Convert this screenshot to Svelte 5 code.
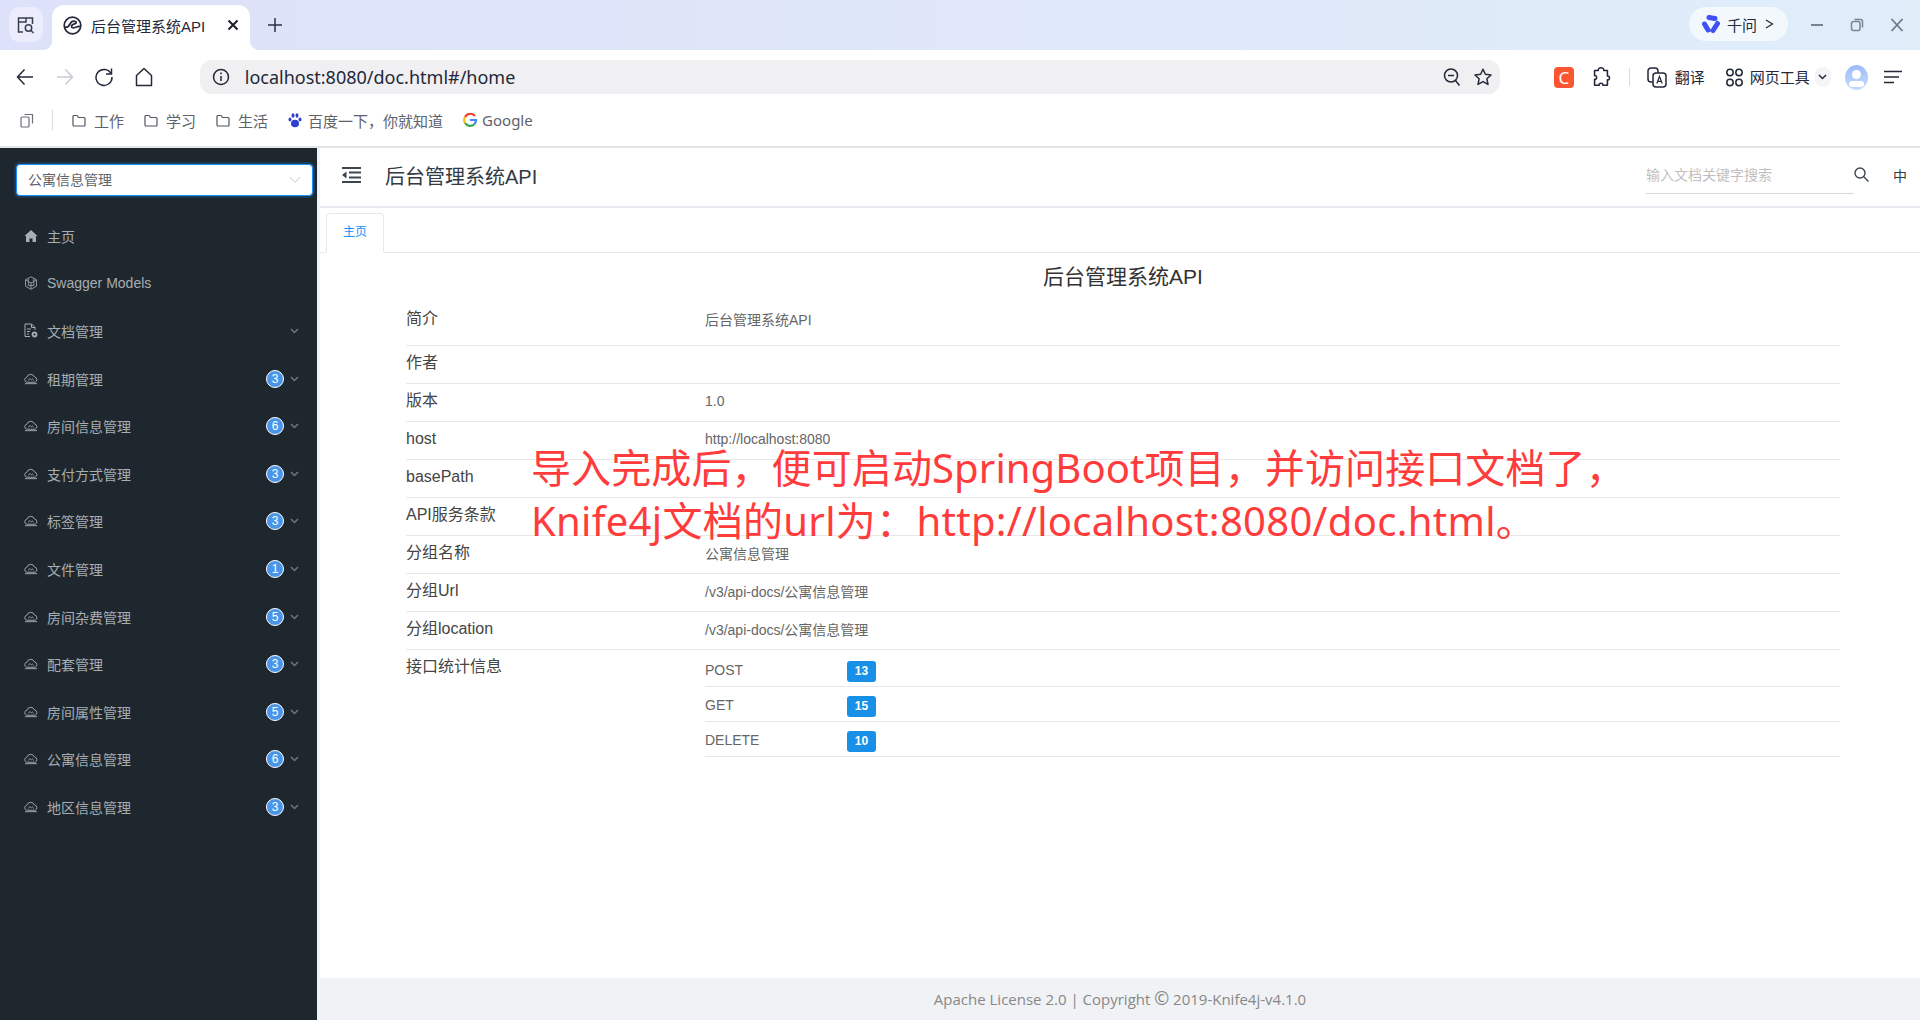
<script>
	const bookmarks = ['工作', '学习', '生活'];
	const groups = [
		{ name: '租期管理', count: 3 },
		{ name: '房间信息管理', count: 6 },
		{ name: '支付方式管理', count: 3 },
		{ name: '标签管理', count: 3 },
		{ name: '文件管理', count: 1 },
		{ name: '房间杂费管理', count: 5 },
		{ name: '配套管理', count: 3 },
		{ name: '房间属性管理', count: 5 },
		{ name: '公寓信息管理', count: 6 },
		{ name: '地区信息管理', count: 3 },
	];
	const rows = [
		{ label: '作者', value: '' },
		{ label: '版本', value: '1.0' },
		{ label: 'host', value: 'http://localhost:8080' },
		{ label: 'basePath', value: '/' },
		{ label: 'API服务条款', value: '' },
		{ label: '分组名称', value: '公寓信息管理' },
		{ label: '分组Url', value: '/v3/api-docs/公寓信息管理' },
		{ label: '分组location', value: '/v3/api-docs/公寓信息管理' },
	];
	const stats = [
		{ method: 'POST', count: 13 },
		{ method: 'GET', count: 15 },
		{ method: 'DELETE', count: 10 },
	];
</script>

<div class="page">
	<div class="tabbar">
		<div class="side-btn">
			<svg width="20" height="20" viewBox="0 0 20 20" fill="none" stroke="#3a3f4c" stroke-width="1.5"><path d="M7 17H2.5V3h14v6M2.5 7H10V3" /><circle cx="12.5" cy="13" r="3.2" /><path d="M15 15.5l2.5 2.5" /></svg>
		</div>
		<div class="tab">
			<svg width="19" height="19" viewBox="0 0 19 19" fill="none" stroke="#23283a" stroke-width="1.7"><circle cx="9.5" cy="9.5" r="8.3" /><path d="M2 11c3 1 4-1 5-3s3-3.5 5.500-2.500c1 .4 1 1.500 0 2-2 .6-4 1-4 3 0 1.500 2 1.500 3.500 1 2-.6 3-1.500 5-1" /></svg>
			<span class="tab-title">后台管理系统API</span>
			<svg class="tab-close" width="12" height="12" viewBox="0 0 12 12" stroke="#1c1f2a" stroke-width="2"><path d="M1.5 1.5l9 9M10.5 1.5l-9 9" /></svg>
		</div>
		<svg class="plus" width="14" height="14" viewBox="0 0 14 14" stroke="#2b3040" stroke-width="1.5"><path d="M7 0v14M0 7h14" /></svg>
		<div class="pill">
			<svg width="20" height="20" viewBox="0 0 20 20" fill="none" stroke="#3f51f5" stroke-width="5" stroke-linecap="round"><path d="M8 3.5l6 1M3.5 10l3.5 6M16.5 9.5l-4.5 7" /></svg>
			<span class="pill-text">千问</span>
			<svg width="9" height="10" viewBox="0 0 9 10" fill="none" stroke="#23283a" stroke-width="1.2"><path d="M1 1l6.5 4L1 9" /></svg>
		</div>
		<svg class="win-btn first" width="14" height="14" viewBox="0 0 14 14" stroke="#6b7586" stroke-width="1.8"><path d="M1 7h12" /></svg>
		<svg class="win-btn" width="14" height="14" viewBox="0 0 14 14" fill="none" stroke="#7b8594" stroke-width="1.5"><rect x="1.5" y="3.5" width="8.5" height="9" rx="2" /><path d="M4.5 1.5h6a2 2 0 0 1 2 2v6" /></svg>
		<svg class="win-btn last" width="14" height="14" viewBox="0 0 14 14" stroke="#6b7586" stroke-width="1.7"><path d="M1.5 1l11 12M12.5 1l-11 12" /></svg>
	</div>

	<div class="toolbar">
		<div class="nav-btn">
			<svg width="18" height="18" viewBox="0 0 18 18" fill="none" stroke="#23283a" stroke-width="1.5"><path d="M17 9H1.5M8.5 1.5 1.5 9l7 7.5" /></svg>
		</div>
		<div class="nav-btn">
			<svg width="18" height="18" viewBox="0 0 18 18" fill="none" stroke="#c9ccd3" stroke-width="1.5"><path d="M1 9h15.5M9.5 1.5l7 7.5-7 7.5" /></svg>
		</div>
		<div class="nav-btn">
			<svg width="20" height="20" viewBox="0 0 20 20" fill="none" stroke="#23283a" stroke-width="1.5"><path d="M17 6.5A8 8 0 1 0 18 10" /><path d="M17.5 1.5V7H12" /></svg>
		</div>
		<div class="nav-btn">
			<svg width="20" height="20" viewBox="0 0 20 20" fill="none" stroke="#23283a" stroke-width="1.5"><path d="M2.5 18.5V8.5L10 1.5l7.5 7v10z" stroke-linejoin="round" /></svg>
		</div>
		<div class="address">
			<svg width="18" height="18" viewBox="0 0 18 18" fill="none" stroke="#23283a" stroke-width="1.5"><circle cx="9" cy="9" r="7.5" /><path d="M9 8v5M9 4.5v1.8" /></svg>
			<span class="url">localhost:8080/doc.html#/home</span>
			<svg class="addr-zoom" width="18" height="20" viewBox="0 0 18 20" fill="none" stroke="#23283a" stroke-width="1.5"><circle cx="8" cy="8.5" r="6.5" /><path d="M5 8.5h6M12.5 13.5l4 5" /></svg>
			<svg class="addr-star" width="18" height="18" viewBox="0 0 18 18" fill="none" stroke="#23283a" stroke-width="1.5"><path d="M9 1.2l2.4 5.1 5.6.7-4.1 3.8 1.1 5.6L9 13.6l-5 2.8 1.1-5.6L1 7l5.6-.7z" stroke-linejoin="round" /></svg>
		</div>
		<div class="ext-c">C</div>
		<svg class="ext-puzzle" width="20" height="22" viewBox="0 0 20 24" fill="none" stroke="#23283a" stroke-width="1.7"><path d="M7 5H3v5.5c3-1 3 5 0 4V21h5c-1-3 5-3 4 0h5v-6c3 1 3-5 0-4V5h-4c1-4-7-4-6 0z" stroke-linejoin="round" /></svg>
		<div class="tool-sep"></div>
		<svg class="tr-icon" width="20" height="21" viewBox="0 0 20 21" fill="none" stroke="#23283a" stroke-width="1.5"><path d="M6 15H4a3 3 0 0 1-3-3V4a3 3 0 0 1 3-3h4a3 3 0 0 1 3 3v2" /><rect x="6" y="6" width="13" height="14" rx="3" /><path d="M9.8 16.5l2.7-7 2.7 7M10.8 14.3h3.4" stroke-width="1.2" /></svg>
		<span class="tool-text tr-text">翻译</span>
		<svg class="grid-icon" width="17" height="19" viewBox="0 0 17 19" fill="none" stroke="#23283a" stroke-width="1.5"><circle cx="4" cy="4.5" r="3.2" /><circle cx="13" cy="4.5" r="3.2" /><circle cx="4" cy="14.5" r="3.2" /><circle cx="13" cy="14.5" r="3.2" /></svg>
		<span class="tool-text grid-text">网页工具</span>
		<div class="chev-wrap">
			<svg width="9" height="6" viewBox="0 0 9 6" fill="none" stroke="#23283a" stroke-width="1.5"><path d="M1 1l3.5 3.5L8 1" /></svg>
		</div>
		<div class="avatar"><span class="avatar-head"></span><span class="avatar-body"></span></div>
		<svg class="tool-menu" width="18" height="14" viewBox="0 0 18 14" stroke="#23283a" stroke-width="1.5"><path d="M0 1.5h18M0 7h15M0 12.5h10" /></svg>
	</div>

	<div class="bookmarks">
		<svg class="bm-copy" width="14" height="15" viewBox="0 0 14 15" fill="none" stroke="#6a6f7a" stroke-width="1.2"><rect x="1" y="4" width="8" height="10" rx="1" /><path d="M4.5 1.5h8v9" /></svg>
		<div class="bm-sep"></div>
		{#each bookmarks as b}
			<div class="bm">
				<svg class="folder" width="14" height="13" viewBox="0 0 14 13" fill="none" stroke="#4e535e" stroke-width="1.2"><path d="M1 2.5a1 1 0 0 1 1-1h3l1.5 2H12a1 1 0 0 1 1 1V11a1 1 0 0 1-1 1H2a1 1 0 0 1-1-1z" /></svg>
				<span>{b}</span>
			</div>
		{/each}
		<div class="bm">
			<svg width="14" height="16" viewBox="0 0 14 16" fill="#2f3fd0"><ellipse cx="7" cy="11.5" rx="4" ry="3.8" /><ellipse cx="2" cy="7.5" rx="1.5" ry="2" /><ellipse cx="12" cy="7.5" rx="1.5" ry="2" /><ellipse cx="5" cy="3.5" rx="1.5" ry="2.2" /><ellipse cx="9" cy="3.5" rx="1.5" ry="2.2" /></svg>
			<span class="baidu">百度一下，你就知道</span>
		</div>
		<div class="bm">
			<svg width="14" height="14" viewBox="0 0 14 14" fill="none" stroke-width="2.2"><path d="M12 3A6 6 0 0 0 2 4" stroke="#ea4335" /><path d="M2 4a6 6 0 0 0 0 6" stroke="#fbbc05" /><path d="M2 10a6 6 0 0 0 9.5 1" stroke="#34a853" /><path d="M11.5 11A6 6 0 0 0 13 7H7" stroke="#4285f4" /></svg>
			<span class="google">Google</span>
		</div>
	</div>

	<div class="body">
		<aside class="sidebar">
			<div class="group-select">
				<span class="select-text">公寓信息管理</span>
				<svg width="12" height="8" viewBox="0 0 12 8" fill="none" stroke="#c0c4cc" stroke-width="1"><path d="M1 1l5 5.5L11 1" /></svg>
			</div>
			<nav class="menu">
				<div class="item">
					<svg class="item-icon" width="14" height="14" viewBox="0 0 14 14" fill="#a6adb3"><path d="M7 1 .5 7H2v6h3.5V9.5h3V13H12V7h1.5z" /></svg>
					<span class="item-name">主页</span>
				</div>
				<div class="item">
					<svg class="item-icon" width="14" height="14" viewBox="0 0 14 14" fill="none" stroke="#8f969c" stroke-width="1"><path d="M7 .8l5.5 3v6.4L7 13.200l-5.500-3V3.800zM1.500 3.800 7 7l5.500-3.200M7 7v6.200M4.200 2.300 4.500 9.500 9.800 9.500 9.800 2.300" /></svg>
					<span class="item-name">Swagger Models</span>
				</div>
				<div class="item">
					<svg class="item-icon" width="14" height="15" viewBox="0 0 14 15" fill="none" stroke="#a6adb3" stroke-width="1"><path d="M6 13.5H1V1h6.5L11 4.5V7M7.5 1v3.5H11M3 6h4M3 8.5h3M3 11h2" /><circle cx="10.5" cy="11.5" r="2" stroke-width="1.8" /></svg>
					<span class="item-name">文档管理</span>
					<svg class="item-chev" width="9" height="6" viewBox="0 0 9 6" fill="none" stroke="#6f777d" stroke-width="1.5"><path d="M1 1l3.5 3.5L8 1" /></svg>
				</div>
				{#each groups as g}
					<div class="item">
						<svg class="item-icon" width="15" height="12" viewBox="0 0 15 12" fill="none" stroke="#a6adb3" stroke-width="1"><path d="M3 9.5A2.700 2.700 0 0 1 3 4.200 4.300 4.300 0 0 1 11.200 3.800 3 3 0 0 1 12 9.500zM1 11h13M4.500 7.500l2-2 1.500 1.500 1-1 1.500 1.500" /></svg>
						<span class="item-name">{g.name}</span>
						<span class="count">{g.count}</span>
						<svg class="item-chev" width="9" height="6" viewBox="0 0 9 6" fill="none" stroke="#6f777d" stroke-width="1.5"><path d="M1 1l3.5 3.5L8 1" /></svg>
					</div>
				{/each}
			</nav>
		</aside>

		<main class="main">
			<header class="topbar">
				<svg width="19" height="16" viewBox="0 0 19 16" fill="#3d4650"><path d="M0 0h19v2H0zM7 4.5h12v2H7zM7 9.5h12v2H7zM0 14h19v2H0zM4.5 4.5v7L0 8z" /></svg>
				<h1 class="top-title">后台管理系统API</h1>
				<div class="search">输入文档关键字搜索</div>
				<svg class="search-icon" width="15" height="15" viewBox="0 0 15 15" fill="none" stroke="#3d4650" stroke-width="1.4"><circle cx="6" cy="6" r="5" /><path d="M9.8 9.8 14.5 14.5" /></svg>
				<span class="lang">中</span>
			</header>
			<div class="page-tabs">
				<div class="page-tab">主页</div>
			</div>
			<div class="content">
				<h2 class="doc-title">后台管理系统API</h2>
				<div class="row first">
					<div class="label">简介</div>
					<div class="value">后台管理系统API</div>
				</div>
				{#each rows as r}
					<div class="row">
						<div class="label">{r.label}</div>
						<div class="value">{r.value}</div>
					</div>
				{/each}
				<div class="row last">
					<div class="label">接口统计信息</div>
					<div class="stats">
						{#each stats as s}
							<div class="stat">
								<span class="method">{s.method}</span>
								<span class="stat-count">{s.count}</span>
							</div>
						{/each}
					</div>
				</div>
				<div class="note">
					<div class="note-a">导入完成后，便可启动SpringBoot项目，并访问接口文档了，</div>
					<div class="note-b">Knife4j文档的url为：http://localhost:8080/doc.html。</div>
				</div>
			</div>
			<footer class="footer">Apache License 2.0 | Copyright <span class="copy">©</span> 2019-Knife4j-v4.1.0</footer>
		</main>
	</div>
</div>

<style>
	:global(body) {
		margin: 0;
		font-family: "Liberation Sans", "Noto Sans CJK SC", sans-serif;
	}
	.page {
		width: 1920px;
		height: 1020px;
		display: flex;
		flex-direction: column;
		overflow: hidden;
		background: #fff;
	}

	/* browser chrome */
	.tabbar {
		height: 50px;
		display: flex;
		align-items: flex-start;
		background: linear-gradient(90deg, #dde1f9 0%, #dfe7f9 50%, #dfedf9 100%);
		flex-shrink: 0;
	}
	.side-btn {
		width: 34px;
		height: 35px;
		margin: 7px 0 0 9px;
		border-radius: 10px;
		background: #ebedfc;
		display: flex;
		align-items: center;
		justify-content: center;
	}
	.tab {
		position: relative;
		width: 198px;
		height: 45px;
		margin: 5px 0 0 9px;
		padding: 0 0 5px 11px;
		box-sizing: border-box;
		background: #fff;
		border-radius: 12px 12px 0 0;
		display: flex;
		align-items: center;
	}
	.tab::before,
	.tab::after {
		content: '';
		position: absolute;
		bottom: 0;
		width: 10px;
		height: 10px;
	}
	.tab::before {
		left: -10px;
		background: radial-gradient(circle at 0 0, transparent 10px, #fff 10.5px);
	}
	.tab::after {
		right: -10px;
		background: radial-gradient(circle at 100% 0, transparent 10px, #fff 10.5px);
	}
	.tab-title {
		margin-left: 9px;
		font-size: 15px;
		color: #23283a;
	}
	.tab-close {
		margin-left: 22px;
	}
	.plus {
		margin: 18px 0 0 18px;
	}
	.pill {
		margin: 7px 0 0 auto;
		width: 99px;
		height: 34px;
		box-sizing: border-box;
		padding-left: 12px;
		border-radius: 17px;
		background: #f3f8fd;
		display: flex;
		align-items: center;
	}
	.pill-text {
		margin: 0 8px 0 6px;
		font-size: 15px;
		color: #23283a;
	}
	.win-btn {
		margin: 18px 0 0 26px;
	}
	.win-btn.first {
		margin-left: 22px;
	}
	.win-btn.last {
		margin-right: 16px;
	}
	.toolbar {
		height: 50px;
		flex-shrink: 0;
		display: flex;
		align-items: center;
		padding-left: 5px;
		background: #fff;
		border-radius: 12px 12px 0 0;
		box-sizing: border-box;
		padding-top: 4px;
	}
	.nav-btn {
		width: 39.7px;
		display: flex;
		justify-content: center;
	}
	.address {
		width: 1300px;
		height: 34px;
		margin-left: 36px;
		padding: 0 10px 0 12px;
		box-sizing: border-box;
		background: #f0f0f2;
		border-radius: 12px;
		display: flex;
		align-items: center;
		flex-shrink: 0;
	}
	.url {
		margin-left: 15px;
		font: 18px "Noto Sans", sans-serif;
		color: #23283a;
	}
	.addr-zoom {
		margin-left: auto;
	}
	.addr-star {
		margin: 0 -2px 0 13px;
	}
	.ext-c {
		width: 20px;
		height: 21px;
		margin-left: 54px;
		border-radius: 4px;
		background: #fb5531;
		color: #fff;
		font: 17px/21px "Noto Sans", sans-serif;
		text-align: center;
	}
	.ext-puzzle {
		margin-left: 17px;
	}
	.tool-sep {
		width: 1px;
		height: 18px;
		margin-left: 18px;
		background: #d9dbdf;
	}
	.tr-icon {
		margin-left: 17px;
	}
	.tool-text {
		margin-bottom: 2px;
		font-size: 15px;
		color: #23283a;
	}
	.tr-text {
		margin-left: 8px;
	}
	.grid-icon {
		margin-left: 21px;
	}
	.grid-text {
		margin-left: 7px;
	}
	.chev-wrap {
		width: 16px;
		height: 20px;
		margin-left: 5px;
		border-radius: 8px;
		background: #f4f5f6;
		display: flex;
		align-items: center;
		justify-content: center;
	}
	.avatar {
		position: relative;
		width: 23px;
		height: 25px;
		margin-left: 14px;
		border-radius: 50%;
		background: linear-gradient(180deg, #9dbdf8, #c6daff);
		overflow: hidden;
		flex-shrink: 0;
	}
	.avatar-head {
		position: absolute;
		left: 7px;
		top: 5px;
		width: 9px;
		height: 9px;
		border-radius: 50%;
		background: #fff;
	}
	.avatar-body {
		position: absolute;
		left: 4px;
		top: 16px;
		width: 15px;
		height: 6px;
		border-radius: 3px;
		background: #fff;
	}
	.tool-menu {
		margin-left: 16px;
	}
	.bookmarks {
		height: 48px;
		flex-shrink: 0;
		box-sizing: border-box;
		border-bottom: 2px solid #e3e4e8;
		display: flex;
		align-items: center;
		padding: 0 0 6px 20px;
		font-size: 15px;
		color: #5d626d;
	}
	.bm-sep {
		width: 1px;
		height: 20px;
		margin: 0 19px 0 18px;
		background: #d9dbdf;
	}
	.bm {
		display: flex;
		align-items: center;
		margin-right: 20px;
	}
	.folder {
		margin-right: 8px;
	}
	.baidu {
		margin-left: 6px;
	}
	.google {
		margin-left: 5px;
		font: 15px "Noto Sans", sans-serif;
	}

	/* sidebar */
	.body {
		flex: 1;
		display: flex;
		min-height: 0;
	}
	.sidebar {
		width: 317px;
		flex-shrink: 0;
		background: #1f272e;
	}
	.group-select {
		height: 32px;
		margin: 16px 4px 16px 16px;
		padding: 0 11px;
		box-sizing: border-box;
		background: #fff;
		border: 1px solid #1890ff;
		border-radius: 4px;
		box-shadow: 0 0 0 2px rgba(24, 144, 255, 0.2);
		display: flex;
		align-items: center;
		justify-content: space-between;
		font-size: 14px;
		color: #5f6368;
	}
	.select-text {
		margin-bottom: 2px;
	}
	.item {
		height: 47.6px;
		display: flex;
		align-items: center;
		padding-left: 24px;
		font-size: 14px;
		color: #a6adb3;
	}
	.item-icon {
		width: 14px;
		flex-shrink: 0;
	}
	.item-name {
		margin-left: 9px;
		flex: 1;
	}
	.count {
		width: 16px;
		height: 16px;
		margin-right: 6px;
		border: 1px solid #fff;
		border-radius: 50%;
		background: #4b95e9;
		color: #fff;
		font-size: 12px;
		line-height: 16px;
		text-align: center;
	}
	.item-chev {
		margin-right: 18px;
	}

	/* main */
	.main {
		flex: 1;
		display: flex;
		flex-direction: column;
		min-width: 0;
		border-left: 3px solid #f0f2f5;
	}
	.topbar {
		height: 60px;
		flex-shrink: 0;
		box-sizing: border-box;
		border-bottom: 2px solid #e8ebf0;
		padding: 0 0 4px 22px;
		display: flex;
		align-items: center;
	}
	.top-title {
		margin: 0 0 0 24px;
		font-size: 20px;
		font-weight: 400;
		color: #333a42;
	}
	.search {
		width: 208px;
		height: 34px;
		margin: 4px 0 0 auto;
		box-sizing: border-box;
		border-bottom: 1px solid #d9d9d9;
		font-size: 14px;
		line-height: 30px;
		color: #bfbfbf;
	}
	.search-icon {
		margin: 0 0 1px 0;
	}
	.lang {
		margin: 0 13px 0 24px;
		font-size: 14px;
		color: #333a42;
	}
	.page-tabs {
		height: 45px;
		flex-shrink: 0;
		box-sizing: border-box;
		padding: 5px 0 0 6px;
		border-bottom: 1px solid #e8e8e8;
	}
	.page-tab {
		width: 58px;
		height: 40px;
		box-sizing: border-box;
		border: 1px solid #e8e8e8;
		border-bottom: 1px solid #fff;
		border-radius: 4px 4px 0 0;
		font-size: 12px;
		line-height: 36px;
		text-align: center;
		color: #1890ff;
	}
	.content {
		position: relative;
		flex: 1;
		min-height: 0;
		padding: 0 80px 0 86px;
	}
	.doc-title {
		margin: 0;
		height: 48px;
		font-size: 21px;
		font-weight: 400;
		line-height: 48px;
		text-align: center;
		color: #333;
	}
	.row {
		display: flex;
		min-height: 38px;
		padding-bottom: 3px;
		box-sizing: border-box;
		border-bottom: 1px solid #e8e8e8;
		align-items: center;
	}
	.row.first {
		height: 45px;
		padding-bottom: 8px;
	}
	.row.last {
		align-items: flex-start;
		border-bottom: none;
		padding-bottom: 0;
	}
	.label {
		width: 299px;
		flex-shrink: 0;
		font-size: 16px;
		line-height: 34px;
		color: #444;
	}
	.value {
		font-size: 14px;
		color: #666;
	}
	.stats {
		flex: 1;
		margin-top: 2px;
	}
	.stat {
		height: 35px;
		box-sizing: border-box;
		border-bottom: 1px solid #e8e8e8;
		display: flex;
		align-items: center;
	}
	.method {
		width: 142px;
		margin-top: 2px;
		font-size: 14px;
		color: #666;
	}
	.stat-count {
		width: 29px;
		height: 21px;
		margin-top: 4px;
		border-radius: 3px;
		background: #1890e8;
		color: #fff;
		font-size: 12px;
		font-weight: 700;
		line-height: 21px;
		text-align: center;
	}
	.note {
		position: absolute;
		left: 211px;
		top: 188px;
		font: 40px/53px "Noto Sans", "Noto Sans CJK SC", sans-serif;
		color: #ff3b3b;
		white-space: nowrap;
	}
	.note-a {
		letter-spacing: 0.1px;
	}
	.note-b {
		letter-spacing: 0.3px;
	}
	.footer {
		height: 42px;
		flex-shrink: 0;
		background: #f0f2f5;
		font: 15px/42px "Open Sans", sans-serif;
		text-align: center;
		color: #888;
	}
	.copy {
		font-size: 18px;
		line-height: 1;
	}
</style>
